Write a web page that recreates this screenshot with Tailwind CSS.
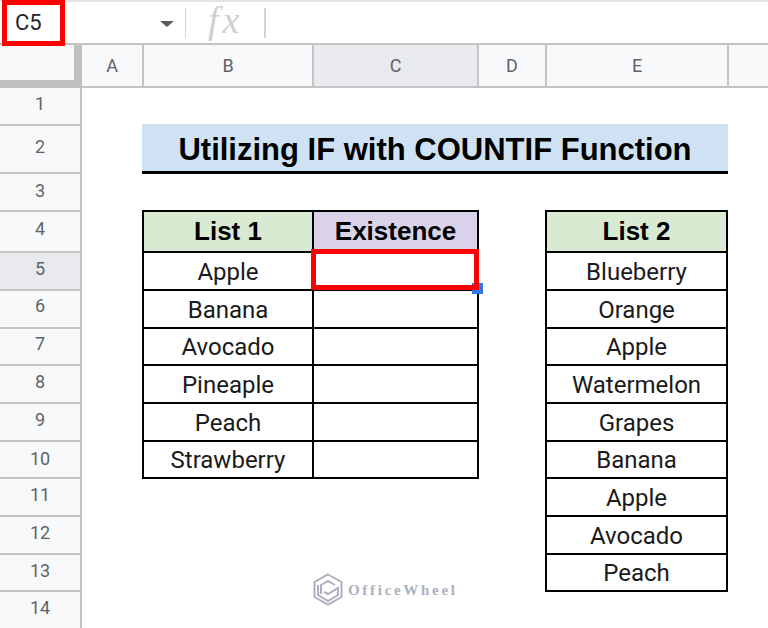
<!DOCTYPE html>
<html lang="en">
  <head>
    <meta charset="UTF-8" />
    <script src="https://cdn.jsdelivr.net/npm/@tailwindcss/browser@4"></script>
    <title>Utilizing IF with COUNTIF Function</title>
  </head>
  <body class="relative w-[768px] h-[628px] overflow-hidden bg-white font-['Roboto',sans-serif]">
    <!-- Formula bar -->
    <div class="flex items-center h-[45px] border-t-2 border-b-2 border-t-[#e3e3e8] border-b-[#c4c4c4]">
      <div class="w-[62px] pl-[15px] text-[22px] text-[#20242c]">C5</div>
      <div class="flex justify-end w-[112px]">
        <div class="w-0 h-0 border-x-[7px] border-x-transparent border-t-[6px] border-t-[#5c5c5c] mt-[2px]"></div>
      </div>
      <div class="w-px h-[30px] ml-[11px] bg-[#d4d4d4]"></div>
      <div class="w-[78px] pl-[22px] font-['Liberation_Serif',serif] italic text-[38px] leading-none tracking-[4px] text-[#cfcfcf] -mt-[5px]">fx</div>
      <div class="w-[2px] h-[30px] bg-[#d4d4d4]"></div>
    </div>

    <!-- Column headers -->
    <div class="flex h-[43px] text-[18px] text-[#5f6368] border-b-[2px] border-b-[#c4c4c4]">
      <div class="w-[82px] bg-[#f8f9fa] border-r-[8px] border-b-[8px] border-[#c0c0c0] -mb-[2px]"></div>
      <div class="flex items-center justify-center w-[62px] bg-[#f8f9fa] border-r-2 border-[#c4c4c4]">A</div>
      <div class="flex items-center justify-center w-[170px] bg-[#f8f9fa] border-r-2 border-[#c4c4c4]">B</div>
      <div class="flex items-center justify-center w-[165px] bg-[#e8eaed] border-r-2 border-[#c4c4c4]">C</div>
      <div class="flex items-center justify-center w-[68px] bg-[#f8f9fa] border-r-2 border-[#c4c4c4]">D</div>
      <div class="flex items-center justify-center w-[182px] bg-[#f8f9fa] border-r-2 border-[#c4c4c4]">E</div>
      <div class="flex-1 bg-[#f8f9fa]"></div>
    </div>

    <div class="flex">
      <!-- Row headers -->
      <div class="w-[82px] text-[18px] text-[#5f6368] border-r-2 border-[#c4c4c4]">
        <div class="flex items-center justify-center h-[38px] pb-[5px] bg-[#f8f9fa] border-b-2 border-[#c4c4c4]">1</div>
        <div class="flex items-center justify-center h-[48px] pb-[6px] bg-[#f8f9fa] border-b-2 border-[#c4c4c4]">2</div>
        <div class="flex items-center justify-center h-[38px] pb-[4px] bg-[#f8f9fa] border-b-2 border-[#c4c4c4]">3</div>
        <div class="flex items-center justify-center h-[41px] pb-[6px] bg-[#f8f9fa] border-b-2 border-[#c4c4c4]">4</div>
        <div class="flex items-center justify-center h-[38px] pb-[6px] bg-[#e8eaed] border-b-2 border-[#c4c4c4]">5</div>
        <div class="flex items-center justify-center h-[38px] pb-[7px] bg-[#f8f9fa] border-b-2 border-[#c4c4c4]">6</div>
        <div class="flex items-center justify-center h-[37px] pb-[6px] bg-[#f8f9fa] border-b-2 border-[#c4c4c4]">7</div>
        <div class="flex items-center justify-center h-[38px] pb-[6px] bg-[#f8f9fa] border-b-2 border-[#c4c4c4]">8</div>
        <div class="flex items-center justify-center h-[38px] pb-[5px] bg-[#f8f9fa] border-b-2 border-[#c4c4c4]">9</div>
        <div class="flex items-center justify-center h-[37px] pb-[2px] bg-[#f8f9fa] border-b-2 border-[#c4c4c4]">10</div>
        <div class="flex items-center justify-center h-[38px] pb-[5px] bg-[#f8f9fa] border-b-2 border-[#c4c4c4]">11</div>
        <div class="flex items-center justify-center h-[38px] pb-[5px] bg-[#f8f9fa] border-b-2 border-[#c4c4c4]">12</div>
        <div class="flex items-center justify-center h-[37px] pb-[4px] bg-[#f8f9fa] border-b-2 border-[#c4c4c4]">13</div>
        <div class="flex items-center justify-center h-[37px] pb-[7px] bg-[#f8f9fa]">14</div>
      </div>

      <!-- Sheet -->
      <div class="pl-[60px] pt-[36px]">
        <div class="flex items-center justify-center w-[586px] h-[50px] pt-[5px] bg-[#cfe2f3] border-b-[3px] border-black font-['Liberation_Sans',sans-serif] font-bold text-[31px] text-black">
          Utilizing IF with COUNTIF Function
        </div>

        <div class="flex items-start mt-[36px] text-[24px] text-[#1a1a1a]">
          <!-- List 1 -->
          <div class="grid grid-cols-[170px_165px] w-[337px] border-t-2 border-l-2 border-black">
            <div class="flex items-center justify-center h-[41px] bg-[#d9ead3] border-r-2 border-b-2 border-black font-['Liberation_Sans',sans-serif] font-bold text-[26px] text-black">List 1</div>
            <div class="flex items-center justify-center h-[41px] bg-[#d9d2e9] border-r-2 border-b-2 border-black font-['Liberation_Sans',sans-serif] font-bold text-[26px] text-black">Existence</div>
            <div class="flex items-center justify-center h-[38px] pt-[1px] border-r-2 border-b-2 border-black">Apple</div>
            <div class="h-[38px] border-r-2 border-b-2 border-black"></div>
            <div class="flex items-center justify-center h-[38px] pt-[1px] border-r-2 border-b-2 border-black">Banana</div>
            <div class="h-[38px] border-r-2 border-b-2 border-black"></div>
            <div class="flex items-center justify-center h-[37px] pt-[1px] border-r-2 border-b-2 border-black">Avocado</div>
            <div class="h-[37px] border-r-2 border-b-2 border-black"></div>
            <div class="flex items-center justify-center h-[38px] pt-[1px] border-r-2 border-b-2 border-black">Pineaple</div>
            <div class="h-[38px] border-r-2 border-b-2 border-black"></div>
            <div class="flex items-center justify-center h-[38px] pt-[1px] border-r-2 border-b-2 border-black">Peach</div>
            <div class="h-[38px] border-r-2 border-b-2 border-black"></div>
            <div class="flex items-center justify-center h-[37px] pt-[1px] border-r-2 border-b-2 border-black">Strawberry</div>
            <div class="h-[37px] border-r-2 border-b-2 border-black"></div>
          </div>

          <!-- List 2 -->
          <div class="w-[183px] ml-[66px] border-t-2 border-x-2 border-black">
            <div class="flex items-center justify-center h-[41px] bg-[#d9ead3] border-b-2 border-black font-['Liberation_Sans',sans-serif] font-bold text-[26px] text-black">List 2</div>
            <div class="flex items-center justify-center h-[38px] pt-[1px] border-b-2 border-black">Blueberry</div>
            <div class="flex items-center justify-center h-[38px] pt-[1px] border-b-2 border-black">Orange</div>
            <div class="flex items-center justify-center h-[37px] pt-[1px] border-b-2 border-black">Apple</div>
            <div class="flex items-center justify-center h-[38px] pt-[1px] border-b-2 border-black">Watermelon</div>
            <div class="flex items-center justify-center h-[38px] pt-[1px] border-b-2 border-black">Grapes</div>
            <div class="flex items-center justify-center h-[37px] pt-[1px] border-b-2 border-black">Banana</div>
            <div class="flex items-center justify-center h-[38px] pt-[1px] border-b-2 border-black">Apple</div>
            <div class="flex items-center justify-center h-[38px] pt-[1px] border-b-2 border-black">Avocado</div>
            <div class="flex items-center justify-center h-[37px] pt-[1px] border-b-2 border-black">Peach</div>
          </div>
        </div>
      </div>
    </div>

    <!-- Red marks over the sheet -->
    <div class="absolute left-[2px] top-0 w-[63px] h-[46px] border-[5px] border-[#ff0000]"></div>
    <div class="absolute left-[472px] top-[283px] w-[11px] h-[11px] bg-[#2f77ea]"></div>
    <div class="absolute left-[311px] top-[249px] w-[168px] h-[41px] border-[5px] border-[#ff0000]"></div>

    <!-- Watermark -->
    <div class="absolute left-[313px] top-[573px] flex items-center gap-[5px]">
      <svg width="30" height="33" viewBox="0 0 30 33" fill="none" stroke="#adb1bd" stroke-width="2">
        <path d="M15 1.5 L28.5 9 V24 L15 31.5 L1.5 24 V9 Z" />
        <path d="M8 21 V12 L15 8 L22 12" />
        <path d="M5 12 V22 L15 28 L25 22 V15 L15 21 L11 19" />
      </svg>
      <span class="font-['Liberation_Serif',serif] font-bold text-[15px] tracking-[2.7px] text-[#adb1bd] mt-[2px]">OfficeWheel</span>
    </div>
  </body>
</html>
